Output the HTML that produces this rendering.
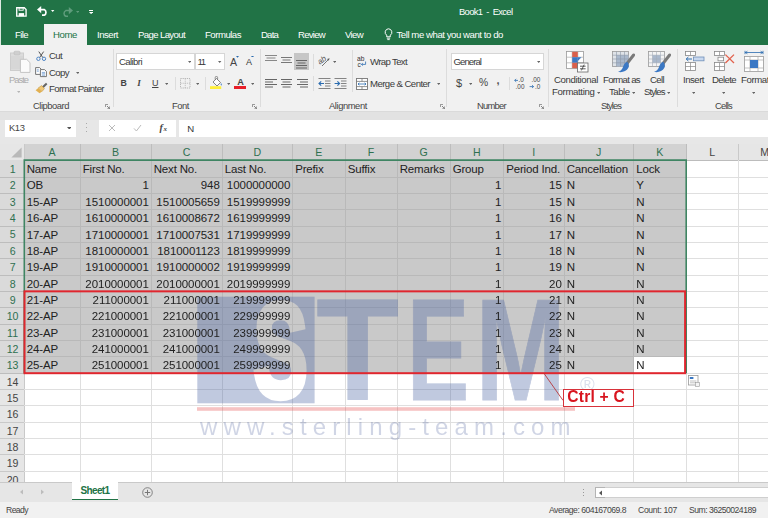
<!DOCTYPE html>
<html><head><meta charset="utf-8"><title>Book1 - Excel</title>
<style>
html,body{margin:0;padding:0;background:#fff;}
body{width:768px;height:518px;overflow:hidden;position:relative;font-family:"Liberation Sans",sans-serif;}
#app{position:absolute;left:0;top:0;width:768px;height:518px;overflow:hidden;}
.r{position:absolute;display:block;}
.t{position:absolute;white-space:pre;}
</style></head><body><div id="app">
<div class="r" style="left:0.00px;top:0.00px;width:768.00px;height:45.20px;background:#217346;"></div>
<div class="r" style="left:0.00px;top:0.00px;width:1.20px;height:45.20px;background:#dfe9e2;"></div>
<div class="r" style="left:43.80px;top:24.00px;width:43.20px;height:22.00px;background:#f1f1f1;"></div>
<svg class="r" style="left:15.9px;top:7.2px" width="10.8" height="9.9" viewBox="0 0 12 11"><path d="M0.8 0.8H9.2L11.2 2.8V10.2H0.8Z" fill="none" stroke="#fff" stroke-width="1.5"/><rect x="3.4" y="1" width="4.6" height="2.6" fill="none" stroke="#fff" stroke-width="1"/><rect x="3" y="6.8" width="6" height="3.4" fill="#fff"/></svg>
<svg class="r" style="left:36.70px;top:5.30px" width="12" height="11" viewBox="0 0 12 11"><path d="M2 4.6H7.2A3.1 3.1 0 0 1 7.2 10.2H5" fill="none" stroke="#fff" stroke-width="1.7"/><path d="M0 4.6L4.2 1V8.2Z" fill="#fff"/></svg>
<svg class="r" style="left:51.40px;top:10.40px" width="3.4" height="2" viewBox="0 0 3.4 2"><path d="M0 0H3.4L1.7 2Z" fill="#fff"/></svg>
<svg class="r" style="left:60.60px;top:5.50px" width="12" height="11" viewBox="0 0 12 11"><path d="M10 4.6H4.8A3.1 3.1 0 0 0 4.8 10.2H7" fill="none" stroke="#5f9c7c" stroke-width="1.5"/><path d="M12 4.6L7.8 1V8.2Z" fill="#5f9c7c"/></svg>
<svg class="r" style="left:75.80px;top:10.50px" width="3.4" height="2" viewBox="0 0 3.4 2"><path d="M0 0H3.4L1.7 2Z" fill="#5f9c7c"/></svg>
<div class="r" style="left:88.50px;top:9.50px;width:4.50px;height:1.20px;background:#fff;"></div>
<svg class="r" style="left:88.65px;top:11.90px" width="4.2" height="2.2" viewBox="0 0 4.2 2.2"><path d="M0 0H4.2L2.1 2.2Z" fill="#fff"/></svg>
<div class="t " style="left:459.00px;top:5.96px;font-size:9.4px;line-height:11.28px;color:#fff;letter-spacing:-0.648px;">Book1  -  Excel</div>
<div class="t " style="left:15.00px;top:29.24px;font-size:9.6px;line-height:11.52px;color:#fff;letter-spacing:-0.617px;">File</div>
<div class="t " style="left:53.00px;top:29.24px;font-size:9.6px;line-height:11.52px;color:#217346;letter-spacing:-0.402px;">Home</div>
<div class="t " style="left:97.00px;top:29.24px;font-size:9.6px;line-height:11.52px;color:#fff;letter-spacing:-0.501px;">Insert</div>
<div class="t " style="left:138.00px;top:29.24px;font-size:9.6px;line-height:11.52px;color:#fff;letter-spacing:-0.628px;">Page Layout</div>
<div class="t " style="left:205.00px;top:29.24px;font-size:9.6px;line-height:11.52px;color:#fff;letter-spacing:-0.501px;">Formulas</div>
<div class="t " style="left:261.00px;top:29.24px;font-size:9.6px;line-height:11.52px;color:#fff;letter-spacing:-0.819px;">Data</div>
<div class="t " style="left:298.00px;top:29.24px;font-size:9.6px;line-height:11.52px;color:#fff;letter-spacing:-0.746px;">Review</div>
<div class="t " style="left:345.00px;top:29.24px;font-size:9.6px;line-height:11.52px;color:#fff;letter-spacing:-0.659px;">View</div>
<svg class="r" style="left:383.50px;top:28.00px" width="9" height="13" viewBox="0 0 9 13"><path d="M4.5 0.8A3.5 3.5 0 0 1 6.3 7.2V8.8H2.7V7.2A3.5 3.5 0 0 1 4.5 0.8Z" fill="none" stroke="#fff" stroke-width="1"/><path d="M2.8 10.2H6.2M3.3 11.6H5.7" stroke="#fff" stroke-width="0.9"/></svg>
<div class="t " style="left:396.50px;top:29.24px;font-size:9.6px;line-height:11.52px;color:#fff;letter-spacing:-0.443px;">Tell me what you want to do</div>
<div class="r" style="left:0.00px;top:45.00px;width:768.00px;height:67.00px;background:#f1f1f1;"></div>
<div class="r" style="left:0.00px;top:111.00px;width:768.00px;height:1.00px;background:#dadada;"></div>
<div class="r" style="left:112.50px;top:49.00px;width:1.00px;height:58.00px;background:#dcdcdc;"></div>
<div class="r" style="left:259.50px;top:49.00px;width:1.00px;height:58.00px;background:#dcdcdc;"></div>
<div class="r" style="left:446.00px;top:49.00px;width:1.00px;height:58.00px;background:#dcdcdc;"></div>
<div class="r" style="left:547.50px;top:49.00px;width:1.00px;height:58.00px;background:#dcdcdc;"></div>
<div class="r" style="left:676.50px;top:49.00px;width:1.00px;height:58.00px;background:#dcdcdc;"></div>
<div class="r" style="left:174.50px;top:77.00px;width:1.00px;height:13.00px;background:#dcdcdc;"></div>
<div class="r" style="left:204.50px;top:77.00px;width:1.00px;height:13.00px;background:#dcdcdc;"></div>
<div class="r" style="left:313.00px;top:54.00px;width:1.00px;height:15.00px;background:#dcdcdc;"></div>
<div class="r" style="left:313.00px;top:76.00px;width:1.00px;height:15.00px;background:#dcdcdc;"></div>
<div class="r" style="left:351.50px;top:50.00px;width:1.00px;height:42.00px;background:#dcdcdc;"></div>
<div class="r" style="left:508.50px;top:77.00px;width:1.00px;height:13.00px;background:#dcdcdc;"></div>
<svg class="r" style="left:9.00px;top:50.00px" width="22" height="25" viewBox="0 0 22 25"><rect x="1.5" y="3" width="13" height="17.5" fill="#dcdcdc" stroke="#cdcdcd"/><path d="M3 6V19M5 6V19M7 6V19M9 6V19M11 6V19M13 6V19" stroke="#cfcfcf" stroke-width="0.7"/><rect x="5" y="1.2" width="6" height="3.6" rx="1" fill="#cfcfcf" stroke="#bdbdbd" stroke-width="0.6"/><path d="M11.4 9.3H17.6L21 12.6V22.4H11.4Z" fill="#fbfbfb" stroke="#c4c4c4"/></svg>
<div class="t " style="left:9.00px;top:74.36px;font-size:9.4px;line-height:11.28px;color:#aaa;letter-spacing:-1.007px;">Paste</div>
<svg class="r" style="left:16.70px;top:90.50px" width="3.6" height="2" viewBox="0 0 3.6 2"><path d="M0 0H3.6L1.8 2Z" fill="#b5b5b5"/></svg>
<svg class="r" style="left:36.00px;top:50.50px" width="11" height="11" viewBox="0 0 11 11"><path d="M2.8 0.6L6.8 6.6M7.6 0.6L3.6 6.6" stroke="#555" stroke-width="1" fill="none"/><circle cx="2.4" cy="7.8" r="1.7" fill="none" stroke="#4f86c6" stroke-width="1"/><circle cx="8" cy="7.8" r="1.7" fill="none" stroke="#4f86c6" stroke-width="1"/></svg>
<div class="t " style="left:49.00px;top:50.24px;font-size:9.6px;line-height:11.52px;color:#3a3a3a;letter-spacing:-0.646px;">Cut</div>
<svg class="r" style="left:35.00px;top:67.30px" width="13" height="11" viewBox="0 0 13 11"><path d="M0.6 0.6H4.6L6.2 2.2V7.4H0.6Z" fill="#fff" stroke="#666" stroke-width="0.9"/><path d="M5.4 2.6H9.6L11.4 4.4V9.6H5.4Z" fill="#fff" stroke="#666" stroke-width="0.9"/><path d="M6.8 5.4H10M6.8 6.8H10M6.8 8.2H10M1.8 2.8H3.8M1.8 4.2H3.8" stroke="#5a8cc8" stroke-width="0.7"/></svg>
<div class="t " style="left:49.00px;top:66.74px;font-size:9.6px;line-height:11.52px;color:#3a3a3a;letter-spacing:-0.603px;">Copy</div>
<svg class="r" style="left:75.70px;top:71.50px" width="3.6" height="2" viewBox="0 0 3.6 2"><path d="M0 0H3.6L1.8 2Z" fill="#666"/></svg>
<svg class="r" style="left:34.80px;top:81.80px" width="13" height="12" viewBox="0 0 13 12"><path d="M7 4.5L11 0.8L12.4 2.2L8.6 6Z" fill="#666"/><path d="M3.2 6L6.6 3.6L9.4 6.6L7 9.6Z" fill="#f0c878" stroke="#b98a2e" stroke-width="0.5"/><path d="M0.6 8.2L3.2 6L7 9.6L4.6 11.2Z" fill="#e2b050"/></svg>
<div class="t " style="left:49.00px;top:82.74px;font-size:9.6px;line-height:11.52px;color:#3a3a3a;letter-spacing:-0.606px;">Format Painter</div>
<div class="t " style="left:33.00px;top:99.86px;font-size:9.4px;line-height:11.28px;color:#444;letter-spacing:-0.470px;">Clipboard</div>
<svg class="r" style="left:105.00px;top:103.50px" width="5" height="5" viewBox="0 0 5 5"><path d="M0.4 3V0.4H3" fill="none" stroke="#777" stroke-width="0.8"/><path d="M2 2L4.6 4.6M4.8 2.4V4.8H2.4" fill="none" stroke="#777" stroke-width="0.9"/></svg>
<div class="r" style="left:116.00px;top:53.00px;width:78.60px;height:16.60px;background:#fff;border:1px solid #d6d6d6;box-sizing:border-box;"></div>
<div class="t " style="left:119.00px;top:55.74px;font-size:9.6px;line-height:11.52px;color:#3a3a3a;letter-spacing:-0.601px;">Calibri</div>
<svg class="r" style="left:187.80px;top:61.00px" width="3.4" height="2" viewBox="0 0 3.4 2"><path d="M0 0H3.4L1.7 2Z" fill="#666"/></svg>
<div class="r" style="left:195.00px;top:53.00px;width:30.00px;height:16.60px;background:#fff;border:1px solid #d6d6d6;box-sizing:border-box;"></div>
<div class="t " style="left:197.50px;top:55.74px;font-size:9.6px;line-height:11.52px;color:#3a3a3a;letter-spacing:-1.482px;">11</div>
<svg class="r" style="left:218.30px;top:61.00px" width="3.4" height="2" viewBox="0 0 3.4 2"><path d="M0 0H3.4L1.7 2Z" fill="#666"/></svg>
<div class="t " style="left:230.00px;top:55.64px;font-size:10.6px;line-height:12.72px;color:#444;">A</div>
<svg class="r" style="left:236.00px;top:56.10px" width="3" height="1.8" viewBox="0 0 3 1.8"><path d="M0 0H3L1.5 1.8Z" fill="#2b6cb0"/></svg>
<div class="t " style="left:246.00px;top:57.40px;font-size:9px;line-height:10.80px;color:#333;">A</div>
<svg class="r" style="left:250.50px;top:55.60px" width="3" height="1.8" viewBox="0 0 3 1.8"><path d="M0 0H3L1.5 1.8Z" fill="#2b6cb0"/></svg>
<div class="t " style="left:120.60px;top:77.92px;font-size:8.8px;line-height:10.56px;color:#444;font-weight:bold;">B</div>
<div class="t " style="left:137.30px;top:77.80px;font-size:9px;line-height:10.80px;color:#444;font-weight:bold;font-style:italic;font-family:'Liberation Serif',serif;">I</div>
<div class="t " style="left:152.00px;top:77.80px;font-size:9px;line-height:10.80px;color:#444;text-decoration:underline;">U</div>
<svg class="r" style="left:164.80px;top:82.50px" width="3.4" height="2" viewBox="0 0 3.4 2"><path d="M0 0H3.4L1.7 2Z" fill="#666"/></svg>
<svg class="r" style="left:180.00px;top:78.00px" width="11" height="11" viewBox="0 0 11 11"><rect x="0.5" y="0.5" width="9.5" height="9.5" fill="none" stroke="#b0b0b0" stroke-width="0.9" stroke-dasharray="1.2 0.9"/><path d="M5.25 0.5V10M0.5 5.25H10" stroke="#b8b8b8" stroke-width="0.8" stroke-dasharray="1.2 0.9"/></svg>
<svg class="r" style="left:195.80px;top:82.50px" width="3.4" height="2" viewBox="0 0 3.4 2"><path d="M0 0H3.4L1.7 2Z" fill="#666"/></svg>
<svg class="r" style="left:210.00px;top:75.90px" width="13" height="14" viewBox="0 0 13 14"><path d="M3 6L6.5 2.5L10.5 6.5L7 10L3 6Z" fill="#fdfdfd" stroke="#666" stroke-width="0.8"/><path d="M5.2 3.6V1.6A1.2 1.2 0 0 1 7.6 1.6V3.4" fill="none" stroke="#666" stroke-width="0.7"/><path d="M11 7C11.8 8.3 12.2 8.9 11.4 9.5C10.5 9.2 10.6 8.3 11 7Z" fill="#3b78c4"/><rect x="0" y="10.2" width="11.2" height="2.8" fill="#ffef3a"/></svg>
<svg class="r" style="left:226.80px;top:82.50px" width="3.4" height="2" viewBox="0 0 3.4 2"><path d="M0 0H3.4L1.7 2Z" fill="#666"/></svg>
<div class="t " style="left:237.30px;top:76.88px;font-size:9.2px;line-height:11.04px;color:#444;font-weight:bold;">A</div>
<div class="r" style="left:234.40px;top:85.90px;width:11.60px;height:2.90px;background:#e8202a;"></div>
<svg class="r" style="left:250.80px;top:82.50px" width="3.4" height="2" viewBox="0 0 3.4 2"><path d="M0 0H3.4L1.7 2Z" fill="#666"/></svg>
<div class="t " style="left:172.00px;top:99.86px;font-size:9.4px;line-height:11.28px;color:#444;letter-spacing:-0.452px;">Font</div>
<svg class="r" style="left:251.60px;top:103.50px" width="5" height="5" viewBox="0 0 5 5"><path d="M0.4 3V0.4H3" fill="none" stroke="#777" stroke-width="0.8"/><path d="M2 2L4.6 4.6M4.8 2.4V4.8H2.4" fill="none" stroke="#777" stroke-width="0.9"/></svg>
<svg class="r" style="left:265.00px;top:54.50px" width="14" height="14" viewBox="0 0 14 14"><rect x="0" y="0" width="12" height="1" fill="#888"/><rect x="1.5" y="2.5" width="9" height="1" fill="#888"/><rect x="0" y="5" width="12" height="1" fill="#888"/></svg>
<svg class="r" style="left:281.00px;top:57.00px" width="14" height="14" viewBox="0 0 14 14"><rect x="0" y="0" width="11" height="1" fill="#777"/><rect x="1.5" y="2.5" width="8" height="1" fill="#777"/><rect x="0" y="5" width="11" height="1" fill="#777"/></svg>
<div class="r" style="left:293.80px;top:53.00px;width:15.60px;height:17.00px;background:#c6c6c6;"></div>
<svg class="r" style="left:296.20px;top:59.50px" width="14" height="14" viewBox="0 0 14 14"><rect x="0" y="0" width="11" height="1" fill="#666"/><rect x="1.5" y="2.5" width="8" height="1" fill="#666"/><rect x="0" y="5" width="11" height="1" fill="#666"/><rect x="0" y="7.5" width="11" height="1" fill="#666"/></svg>
<svg class="r" style="left:318.00px;top:55.00px" width="13" height="12" viewBox="0 0 13 12"><text x="0.5" y="8" font-size="8" font-style="italic" fill="#555" transform="rotate(-35 4 7)" font-family="Liberation Sans,sans-serif">ab</text><path d="M4 11L11 4" stroke="#555" stroke-width="0.8"/><path d="M11.6 3.2L9 4L10.8 5.8Z" fill="#555"/></svg>
<svg class="r" style="left:332.80px;top:61.00px" width="3.4" height="2" viewBox="0 0 3.4 2"><path d="M0 0H3.4L1.7 2Z" fill="#666"/></svg>
<svg class="r" style="left:265.00px;top:78.50px" width="14" height="14" viewBox="0 0 14 14"><rect x="0" y="0" width="12" height="1" fill="#666"/><rect x="0" y="2.5" width="8" height="1" fill="#666"/><rect x="0" y="5" width="12" height="1" fill="#666"/><rect x="0" y="7.5" width="8" height="1" fill="#666"/></svg>
<svg class="r" style="left:281.00px;top:78.50px" width="14" height="14" viewBox="0 0 14 14"><rect x="0" y="0" width="11" height="1" fill="#666"/><rect x="1.5" y="2.5" width="8" height="1" fill="#666"/><rect x="0" y="5" width="11" height="1" fill="#666"/><rect x="1.5" y="7.5" width="8" height="1" fill="#666"/></svg>
<svg class="r" style="left:297.00px;top:78.50px" width="14" height="14" viewBox="0 0 14 14"><rect x="0" y="0" width="11" height="1" fill="#666"/><rect x="3" y="2.5" width="8" height="1" fill="#666"/><rect x="0" y="5" width="11" height="1" fill="#666"/><rect x="3" y="7.5" width="8" height="1" fill="#666"/></svg>
<svg class="r" style="left:318.00px;top:77.50px" width="13" height="12" viewBox="0 0 13 12"><path d="M0.5 0.5H12.5M0.5 10.5H12.5M7 3H12.5M7 5.5H12.5M7 8H12.5" stroke="#777" stroke-width="0.9"/><path d="M6 5.5H1.2M3.2 3.4L1 5.5L3.2 7.6" stroke="#2b6cb0" stroke-width="1.1" fill="none"/></svg>
<svg class="r" style="left:334.00px;top:77.50px" width="13" height="12" viewBox="0 0 13 12"><path d="M0.5 0.5H12.5M0.5 10.5H12.5M7 3H12.5M7 5.5H12.5M7 8H12.5" stroke="#777" stroke-width="0.9"/><path d="M0.6 5.5H5.4M3.4 3.4L5.6 5.5L3.4 7.6" stroke="#2b6cb0" stroke-width="1.1" fill="none"/></svg>
<svg class="r" style="left:357.00px;top:56.00px" width="11" height="11" viewBox="0 0 11 11"><text x="0" y="4.8" font-size="6.6" fill="#333" font-family="Liberation Sans,sans-serif">ab</text><text x="0.4" y="10.6" font-size="6.6" fill="#333" font-family="Liberation Sans,sans-serif">c</text><path d="M8.6 5.5V8.4H4.6M5.8 7.2L4.4 8.4L5.8 9.6" fill="none" stroke="#2b6cb0" stroke-width="0.8"/></svg>
<div class="t " style="left:370.00px;top:56.24px;font-size:9.6px;line-height:11.52px;color:#3a3a3a;letter-spacing:-0.651px;">Wrap Text</div>
<svg class="r" style="left:356.00px;top:77.50px" width="12" height="12" viewBox="0 0 12 12"><rect x="0.5" y="0.5" width="11" height="11" fill="#fff" stroke="#777" stroke-width="0.9"/><path d="M0.5 3.4H11.5M0.5 8.6H11.5M6 0.5V3.4M6 8.6V11.5" stroke="#777" stroke-width="0.8"/><path d="M2 6H10M3.4 4.8L2 6L3.4 7.2M8.6 4.8L10 6L8.6 7.2" fill="none" stroke="#2b6cb0" stroke-width="0.8"/></svg>
<div class="t " style="left:370.00px;top:78.24px;font-size:9.6px;line-height:11.52px;color:#3a3a3a;letter-spacing:-0.554px;">Merge &amp; Center</div>
<svg class="r" style="left:436.80px;top:83.00px" width="3.4" height="2" viewBox="0 0 3.4 2"><path d="M0 0H3.4L1.7 2Z" fill="#666"/></svg>
<div class="t " style="left:329.00px;top:99.86px;font-size:9.4px;line-height:11.28px;color:#444;letter-spacing:-0.422px;">Alignment</div>
<svg class="r" style="left:439.50px;top:103.50px" width="5" height="5" viewBox="0 0 5 5"><path d="M0.4 3V0.4H3" fill="none" stroke="#777" stroke-width="0.8"/><path d="M2 2L4.6 4.6M4.8 2.4V4.8H2.4" fill="none" stroke="#777" stroke-width="0.9"/></svg>
<div class="r" style="left:451.00px;top:53.00px;width:93.00px;height:16.60px;background:#fff;border:1px solid #d6d6d6;box-sizing:border-box;"></div>
<div class="t " style="left:453.50px;top:55.74px;font-size:9.6px;line-height:11.52px;color:#3a3a3a;letter-spacing:-0.950px;">General</div>
<svg class="r" style="left:536.80px;top:61.00px" width="3.4" height="2" viewBox="0 0 3.4 2"><path d="M0 0H3.4L1.7 2Z" fill="#666"/></svg>
<div class="t " style="left:456.00px;top:76.90px;font-size:11px;line-height:13.20px;color:#444;">$</div>
<svg class="r" style="left:468.80px;top:82.50px" width="3.4" height="2" viewBox="0 0 3.4 2"><path d="M0 0H3.4L1.7 2Z" fill="#666"/></svg>
<div class="t " style="left:479.00px;top:77.32px;font-size:10.3px;line-height:12.36px;color:#444;">%</div>
<div class="t " style="left:496.50px;top:73.60px;font-size:11px;line-height:13.20px;color:#555;font-weight:bold;">,</div>
<svg class="r" style="left:514.00px;top:77.00px" width="13" height="13" viewBox="0 0 13 13"><text x="4.4" y="5.4" font-size="6.4" fill="#444" font-family="Liberation Sans,sans-serif">.0</text><text x="1.6" y="12" font-size="6.4" fill="#444" font-family="Liberation Sans,sans-serif">.00</text><path d="M4 3.4H0.8M2.2 2L0.6 3.4L2.2 4.8" stroke="#2b6cb0" stroke-width="0.8" fill="none"/></svg>
<svg class="r" style="left:529.00px;top:77.00px" width="13" height="13" viewBox="0 0 13 13"><text x="2.4" y="5.4" font-size="6.4" fill="#444" font-family="Liberation Sans,sans-serif">.00</text><text x="6" y="12" font-size="6.4" fill="#444" font-family="Liberation Sans,sans-serif">.0</text><path d="M0.6 9.6H4.4M3 8.2L4.6 9.6L3 11" stroke="#2b6cb0" stroke-width="0.8" fill="none"/></svg>
<div class="t " style="left:477.00px;top:99.86px;font-size:9.4px;line-height:11.28px;color:#444;letter-spacing:-0.738px;">Number</div>
<svg class="r" style="left:538.80px;top:103.50px" width="5" height="5" viewBox="0 0 5 5"><path d="M0.4 3V0.4H3" fill="none" stroke="#777" stroke-width="0.8"/><path d="M2 2L4.6 4.6M4.8 2.4V4.8H2.4" fill="none" stroke="#777" stroke-width="0.9"/></svg>
<svg class="r" style="left:565.50px;top:50.50px" width="23" height="23" viewBox="0 0 23 23"><rect x="0.5" y="0.5" width="17" height="17" fill="#fff" stroke="#999" stroke-width="0.8"/><path d="M0.5 6.2H17.5M0.5 11.8H17.5M6.2 0.5V17.5M11.8 0.5V17.5" stroke="#aaa" stroke-width="0.7"/><rect x="6.2" y="0.8" width="5.6" height="5.4" fill="#d9604c"/><rect x="6.2" y="6.2" width="5.6" height="5.6" fill="#3b78c4"/><rect x="6.2" y="11.8" width="5.6" height="5.4" fill="#d9604c"/><path d="M11.8 6.2H15.5L11.8 10Z" fill="#3b78c4"/><rect x="11.5" y="12" width="10.5" height="9" fill="#fff" stroke="#666" stroke-width="0.8"/><path d="M14 15.2H19.6M14 17.8H19.6M18.2 13.6L15.4 19.4" stroke="#333" stroke-width="0.8"/></svg>
<div class="t " style="left:554.00px;top:74.24px;font-size:9.6px;line-height:11.52px;color:#3a3a3a;letter-spacing:-0.366px;">Conditional</div>
<div class="t " style="left:552.00px;top:86.24px;font-size:9.6px;line-height:11.52px;color:#3a3a3a;letter-spacing:-0.338px;">Formatting</div>
<svg class="r" style="left:596.80px;top:91.50px" width="3.4" height="2" viewBox="0 0 3.4 2"><path d="M0 0H3.4L1.7 2Z" fill="#666"/></svg>
<svg class="r" style="left:611.50px;top:51.00px" width="23" height="23" viewBox="0 0 23 23"><rect x="0.5" y="0.5" width="16" height="15" fill="#dfe3e8" stroke="#999" stroke-width="0.8"/><rect x="4.5" y="4.2" width="12" height="11.3" fill="#a9b8cc"/><path d="M0.5 4.2H16.5M0.5 8H16.5M0.5 11.8H16.5M4.5 0.5V15.5M8.5 0.5V15.5M12.5 0.5V15.5" stroke="#8d98a8" stroke-width="0.6"/><path d="M21.6 4L15.4 12" stroke="#7a7a7a" stroke-width="3" stroke-linecap="round"/><path d="M15.2 10.8C12.4 11.8 11.6 14.4 10.6 17C9.8 19 8 20.2 6 20.8C9.6 21.8 14.4 20.6 16.4 16.8C17.2 15.2 17 12.8 15.2 10.8Z" fill="#3b78c4"/></svg>
<div class="t " style="left:603.00px;top:74.24px;font-size:9.6px;line-height:11.52px;color:#3a3a3a;letter-spacing:-0.690px;">Format as</div>
<div class="t " style="left:609.00px;top:86.24px;font-size:9.6px;line-height:11.52px;color:#3a3a3a;letter-spacing:-0.490px;">Table</div>
<svg class="r" style="left:631.80px;top:91.50px" width="3.4" height="2" viewBox="0 0 3.4 2"><path d="M0 0H3.4L1.7 2Z" fill="#666"/></svg>
<svg class="r" style="left:647.50px;top:51.00px" width="23" height="23" viewBox="0 0 23 23"><rect x="0.5" y="0.5" width="16" height="15" fill="#f4f4f4" stroke="#999" stroke-width="0.8"/><rect x="4.5" y="4.2" width="8" height="7.6" fill="#a9b8cc"/><path d="M0.5 4.2H16.5M0.5 8H16.5M0.5 11.8H16.5M4.5 0.5V15.5M8.5 0.5V15.5M12.5 0.5V15.5" stroke="#a4acb8" stroke-width="0.6"/><path d="M21.6 4L15.4 12" stroke="#7a7a7a" stroke-width="3" stroke-linecap="round"/><path d="M15.2 10.8C12.4 11.8 11.6 14.4 10.6 17C9.8 19 8 20.2 6 20.8C9.6 21.8 14.4 20.6 16.4 16.8C17.2 15.2 17 12.8 15.2 10.8Z" fill="#3b78c4"/></svg>
<div class="t " style="left:650.00px;top:74.24px;font-size:9.6px;line-height:11.52px;color:#3a3a3a;letter-spacing:-0.634px;">Cell</div>
<div class="t " style="left:644.00px;top:86.24px;font-size:9.6px;line-height:11.52px;color:#3a3a3a;letter-spacing:-0.940px;">Styles</div>
<svg class="r" style="left:666.80px;top:91.50px" width="3.4" height="2" viewBox="0 0 3.4 2"><path d="M0 0H3.4L1.7 2Z" fill="#666"/></svg>
<div class="t " style="left:601.00px;top:99.86px;font-size:9.4px;line-height:11.28px;color:#444;letter-spacing:-0.933px;">Styles</div>
<svg class="r" style="left:684.50px;top:50.50px" width="22" height="22" viewBox="0 0 22 22"><rect x="0.5" y="0.5" width="10" height="4" fill="#fff" stroke="#888" stroke-width="0.8"/><path d="M5.5 0.5V4.5" stroke="#888" stroke-width="0.7"/><rect x="0.5" y="11.5" width="10" height="8" fill="#fff" stroke="#888" stroke-width="0.8"/><path d="M5.5 11.5V19.5M0.5 15.5H10.5" stroke="#888" stroke-width="0.7"/><rect x="8.5" y="6" width="10.5" height="3.8" fill="#c8d8ee" stroke="#6f8fb8" stroke-width="0.8"/><path d="M7 8H1.4M3.4 6L1.2 8L3.4 10" stroke="#2b6cb0" stroke-width="1" fill="none"/></svg>
<div class="t " style="left:683.00px;top:74.24px;font-size:9.6px;line-height:11.52px;color:#3a3a3a;letter-spacing:-0.501px;">Insert</div>
<svg class="r" style="left:691.80px;top:91.50px" width="3.4" height="2" viewBox="0 0 3.4 2"><path d="M0 0H3.4L1.7 2Z" fill="#666"/></svg>
<svg class="r" style="left:714.00px;top:50.50px" width="23" height="22" viewBox="0 0 23 22"><rect x="0.5" y="0.5" width="10" height="4" fill="#fff" stroke="#888" stroke-width="0.8"/><path d="M5.5 0.5V4.5" stroke="#888" stroke-width="0.7"/><rect x="0.5" y="11.5" width="10" height="8" fill="#fff" stroke="#888" stroke-width="0.8"/><path d="M5.5 11.5V19.5M0.5 15.5H10.5" stroke="#888" stroke-width="0.7"/><rect x="4" y="6.2" width="5.6" height="3.6" fill="#fff" stroke="#888" stroke-width="0.8"/><path d="M11.4 3.6L20 12M20 3.6L11.4 12" stroke="#e2614c" stroke-width="1.3"/></svg>
<div class="t " style="left:712.00px;top:74.24px;font-size:9.6px;line-height:11.52px;color:#3a3a3a;letter-spacing:-0.625px;">Delete</div>
<svg class="r" style="left:721.80px;top:91.50px" width="3.4" height="2" viewBox="0 0 3.4 2"><path d="M0 0H3.4L1.7 2Z" fill="#666"/></svg>
<svg class="r" style="left:743.00px;top:49.50px" width="23" height="24" viewBox="0 0 23 24"><path d="M2 2.5H20M2 0.8V4.2M20 0.8V4.2M4.4 1.2L2.4 2.5L4.4 3.8M17.6 1.2L19.6 2.5L17.6 3.8" stroke="#2b6cb0" stroke-width="0.8" fill="none"/><rect x="1.5" y="6.5" width="19" height="15" fill="#fff" stroke="#999" stroke-width="0.8"/><path d="M1.5 10H20.5M1.5 18H20.5M7 6.5V21.5M15 6.5V21.5" stroke="#aaa" stroke-width="0.7"/><rect x="7" y="10" width="8" height="8" fill="#3b78c4"/></svg>
<div class="t " style="left:741.00px;top:74.24px;font-size:9.6px;line-height:11.52px;color:#3a3a3a;letter-spacing:-0.400px;">Format</div>
<svg class="r" style="left:751.80px;top:91.50px" width="3.4" height="2" viewBox="0 0 3.4 2"><path d="M0 0H3.4L1.7 2Z" fill="#666"/></svg>
<div class="t " style="left:715.00px;top:99.86px;font-size:9.4px;line-height:11.28px;color:#444;letter-spacing:-0.779px;">Cells</div>
<div class="r" style="left:0.00px;top:112.00px;width:768.00px;height:32.00px;background:#e7e7e7;"></div>
<div class="r" style="left:0.00px;top:112.00px;width:768.00px;height:7.80px;background:#e2e2e2;"></div>
<div class="r" style="left:5.00px;top:119.50px;width:71.00px;height:17.00px;background:#fff;"></div>
<div class="t " style="left:9.00px;top:122.36px;font-size:9.4px;line-height:11.28px;color:#444;letter-spacing:-0.408px;">K13</div>
<svg class="r" style="left:66.70px;top:126.90px" width="4.6" height="2.6" viewBox="0 0 4.6 2.6"><path d="M0 0H4.6L2.3 2.6Z" fill="#555"/></svg>
<div class="r" style="left:86.00px;top:123.00px;width:1.20px;height:1.20px;background:#aaa;"></div>
<div class="r" style="left:86.00px;top:127.00px;width:1.20px;height:1.20px;background:#aaa;"></div>
<div class="r" style="left:86.00px;top:131.00px;width:1.20px;height:1.20px;background:#aaa;"></div>
<div class="r" style="left:99.00px;top:119.50px;width:76.50px;height:17.00px;background:#fff;"></div>
<svg class="r" style="left:107.50px;top:124.00px" width="8" height="8" viewBox="0 0 8 8"><path d="M1 1L7 7M7 1L1 7" stroke="#bbb" stroke-width="1"/></svg>
<svg class="r" style="left:132.50px;top:124.00px" width="9" height="8" viewBox="0 0 9 8"><path d="M1 4.4L3.4 7L8 1" stroke="#bbb" stroke-width="1" fill="none"/></svg>
<div class="t " style="left:159.50px;top:122.00px;font-size:10px;line-height:12.00px;color:#444;font-weight:bold;font-style:italic;font-family:'Liberation Serif',serif;">f</div>
<div class="t " style="left:163.50px;top:125.30px;font-size:7px;line-height:8.40px;color:#444;font-weight:bold;font-style:italic;font-family:'Liberation Serif',serif;">x</div>
<div class="r" style="left:179.00px;top:119.50px;width:589.00px;height:17.00px;background:#fff;"></div>
<div class="t " style="left:187.30px;top:123.14px;font-size:9.6px;line-height:11.52px;color:#333;">N</div>
<div class="r" style="left:0.00px;top:144.00px;width:768.00px;height:337.50px;background:#fff;"></div>
<div class="r" style="left:0.00px;top:144.00px;width:768.00px;height:16.00px;background:#e6e6e6;"></div>
<div class="r" style="left:24.00px;top:144.00px;width:662.00px;height:16.00px;background:#d2d2d2;"></div>
<svg class="r" style="left:11.40px;top:147.40px" width="11" height="11" viewBox="0 0 11 11"><path d="M10.6 0.4V10.6H0.4Z" fill="#b9b9b9"/></svg>
<div class="t " style="left:48.46px;top:145.94px;font-size:10.6px;line-height:12.72px;color:#2f7050;">A</div>
<div class="r" style="left:79.50px;top:144.00px;width:1.00px;height:16.00px;background:#bdbdbd;"></div>
<div class="t " style="left:111.96px;top:145.94px;font-size:10.6px;line-height:12.72px;color:#2f7050;">B</div>
<div class="r" style="left:150.50px;top:144.00px;width:1.00px;height:16.00px;background:#bdbdbd;"></div>
<div class="t " style="left:182.67px;top:145.94px;font-size:10.6px;line-height:12.72px;color:#2f7050;">C</div>
<div class="r" style="left:221.50px;top:144.00px;width:1.00px;height:16.00px;background:#bdbdbd;"></div>
<div class="t " style="left:253.42px;top:145.94px;font-size:10.6px;line-height:12.72px;color:#2f7050;">D</div>
<div class="r" style="left:292.00px;top:144.00px;width:1.00px;height:16.00px;background:#bdbdbd;"></div>
<div class="t " style="left:315.21px;top:145.94px;font-size:10.6px;line-height:12.72px;color:#2f7050;">E</div>
<div class="r" style="left:344.50px;top:144.00px;width:1.00px;height:16.00px;background:#bdbdbd;"></div>
<div class="t " style="left:367.76px;top:145.94px;font-size:10.6px;line-height:12.72px;color:#2f7050;">F</div>
<div class="r" style="left:396.50px;top:144.00px;width:1.00px;height:16.00px;background:#bdbdbd;"></div>
<div class="t " style="left:419.38px;top:145.94px;font-size:10.6px;line-height:12.72px;color:#2f7050;">G</div>
<div class="r" style="left:449.50px;top:144.00px;width:1.00px;height:16.00px;background:#bdbdbd;"></div>
<div class="t " style="left:472.92px;top:145.94px;font-size:10.6px;line-height:12.72px;color:#2f7050;">H</div>
<div class="r" style="left:503.00px;top:144.00px;width:1.00px;height:16.00px;background:#bdbdbd;"></div>
<div class="t " style="left:532.28px;top:145.94px;font-size:10.6px;line-height:12.72px;color:#2f7050;">I</div>
<div class="r" style="left:563.50px;top:144.00px;width:1.00px;height:16.00px;background:#bdbdbd;"></div>
<div class="t " style="left:596.10px;top:145.94px;font-size:10.6px;line-height:12.72px;color:#2f7050;">J</div>
<div class="r" style="left:633.00px;top:144.00px;width:1.00px;height:16.00px;background:#bdbdbd;"></div>
<div class="t " style="left:656.21px;top:145.94px;font-size:10.6px;line-height:12.72px;color:#2f7050;">K</div>
<div class="r" style="left:685.50px;top:144.00px;width:1.00px;height:16.00px;background:#bdbdbd;"></div>
<div class="t " style="left:709.30px;top:145.94px;font-size:10.6px;line-height:12.72px;color:#444;">L</div>
<div class="r" style="left:738.00px;top:144.00px;width:1.00px;height:16.00px;background:#c9c9c9;"></div>
<div class="t " style="left:760.34px;top:145.94px;font-size:10.6px;line-height:12.72px;color:#444;">M</div>
<div class="r" style="left:790.50px;top:144.00px;width:1.00px;height:16.00px;background:#c9c9c9;"></div>
<div class="r" style="left:23.50px;top:144.00px;width:1.00px;height:16.00px;background:#c9c9c9;"></div>
<div class="r" style="left:686.00px;top:159.50px;width:82.00px;height:1.00px;background:#bcbcbc;"></div>
<div class="r" style="left:0.00px;top:160.00px;width:24.00px;height:321.50px;background:#e6e6e6;"></div>
<div class="r" style="left:0.00px;top:160.00px;width:24.00px;height:213.20px;background:#dadada;"></div>
<div class="t " style="left:9.65px;top:163.06px;font-size:10.6px;line-height:12.72px;color:#2f7050;">1</div>
<div class="r" style="left:0.00px;top:176.50px;width:24.00px;height:1.00px;background:#bdbdbd;"></div>
<div class="t " style="left:9.65px;top:179.42px;font-size:10.6px;line-height:12.72px;color:#2f7050;">2</div>
<div class="r" style="left:0.00px;top:192.85px;width:24.00px;height:1.00px;background:#bdbdbd;"></div>
<div class="t " style="left:9.65px;top:195.77px;font-size:10.6px;line-height:12.72px;color:#2f7050;">3</div>
<div class="r" style="left:0.00px;top:209.20px;width:24.00px;height:1.00px;background:#bdbdbd;"></div>
<div class="t " style="left:9.65px;top:212.12px;font-size:10.6px;line-height:12.72px;color:#2f7050;">4</div>
<div class="r" style="left:0.00px;top:225.55px;width:24.00px;height:1.00px;background:#bdbdbd;"></div>
<div class="t " style="left:9.65px;top:228.47px;font-size:10.6px;line-height:12.72px;color:#2f7050;">5</div>
<div class="r" style="left:0.00px;top:241.90px;width:24.00px;height:1.00px;background:#bdbdbd;"></div>
<div class="t " style="left:9.65px;top:244.81px;font-size:10.6px;line-height:12.72px;color:#2f7050;">6</div>
<div class="r" style="left:0.00px;top:258.25px;width:24.00px;height:1.00px;background:#bdbdbd;"></div>
<div class="t " style="left:9.65px;top:261.17px;font-size:10.6px;line-height:12.72px;color:#2f7050;">7</div>
<div class="r" style="left:0.00px;top:274.60px;width:24.00px;height:1.00px;background:#bdbdbd;"></div>
<div class="t " style="left:9.65px;top:277.52px;font-size:10.6px;line-height:12.72px;color:#2f7050;">8</div>
<div class="r" style="left:0.00px;top:290.95px;width:24.00px;height:1.00px;background:#bdbdbd;"></div>
<div class="t " style="left:9.65px;top:293.87px;font-size:10.6px;line-height:12.72px;color:#2f7050;">9</div>
<div class="r" style="left:0.00px;top:307.30px;width:24.00px;height:1.00px;background:#bdbdbd;"></div>
<div class="t " style="left:6.71px;top:310.22px;font-size:10.6px;line-height:12.72px;color:#2f7050;">10</div>
<div class="r" style="left:0.00px;top:323.65px;width:24.00px;height:1.00px;background:#bdbdbd;"></div>
<div class="t " style="left:7.10px;top:326.56px;font-size:10.6px;line-height:12.72px;color:#2f7050;">11</div>
<div class="r" style="left:0.00px;top:340.00px;width:24.00px;height:1.00px;background:#bdbdbd;"></div>
<div class="t " style="left:6.71px;top:342.92px;font-size:10.6px;line-height:12.72px;color:#2f7050;">12</div>
<div class="r" style="left:0.00px;top:356.35px;width:24.00px;height:1.00px;background:#bdbdbd;"></div>
<div class="t " style="left:6.71px;top:359.27px;font-size:10.6px;line-height:12.72px;color:#2f7050;">13</div>
<div class="r" style="left:0.00px;top:372.70px;width:24.00px;height:1.00px;background:#bdbdbd;"></div>
<div class="t " style="left:6.71px;top:375.62px;font-size:10.6px;line-height:12.72px;color:#444;">14</div>
<div class="r" style="left:0.00px;top:389.05px;width:24.00px;height:1.00px;background:#c9c9c9;"></div>
<div class="t " style="left:6.71px;top:391.97px;font-size:10.6px;line-height:12.72px;color:#444;">15</div>
<div class="r" style="left:0.00px;top:405.40px;width:24.00px;height:1.00px;background:#c9c9c9;"></div>
<div class="t " style="left:6.71px;top:408.32px;font-size:10.6px;line-height:12.72px;color:#444;">16</div>
<div class="r" style="left:0.00px;top:421.75px;width:24.00px;height:1.00px;background:#c9c9c9;"></div>
<div class="t " style="left:6.71px;top:424.67px;font-size:10.6px;line-height:12.72px;color:#444;">17</div>
<div class="r" style="left:0.00px;top:438.10px;width:24.00px;height:1.00px;background:#c9c9c9;"></div>
<div class="t " style="left:6.71px;top:441.02px;font-size:10.6px;line-height:12.72px;color:#444;">18</div>
<div class="r" style="left:0.00px;top:454.45px;width:24.00px;height:1.00px;background:#c9c9c9;"></div>
<div class="t " style="left:6.71px;top:457.37px;font-size:10.6px;line-height:12.72px;color:#444;">19</div>
<div class="r" style="left:0.00px;top:470.80px;width:24.00px;height:1.00px;background:#c9c9c9;"></div>
<div class="t " style="left:6.71px;top:473.72px;font-size:10.6px;line-height:12.72px;color:#444;">20</div>
<div class="r" style="left:0.00px;top:487.15px;width:24.00px;height:1.00px;background:#c9c9c9;"></div>
<div class="r" style="left:23.50px;top:160.00px;width:1.00px;height:321.50px;background:#c9c9c9;"></div>
<div class="r" style="left:24.00px;top:160.00px;width:662.00px;height:212.55px;background:#c9c9c9;"></div>
<div class="r" style="left:633.50px;top:356.85px;width:52.50px;height:16.35px;background:#fff;"></div>
<div class="r" style="left:24.00px;top:176.50px;width:744.00px;height:1.00px;background:#dfdfdf;"></div>
<div class="r" style="left:24.00px;top:176.50px;width:662.00px;height:1.00px;background:#b9b9b9;"></div>
<div class="r" style="left:24.00px;top:192.85px;width:744.00px;height:1.00px;background:#dfdfdf;"></div>
<div class="r" style="left:24.00px;top:192.85px;width:662.00px;height:1.00px;background:#b9b9b9;"></div>
<div class="r" style="left:24.00px;top:209.20px;width:744.00px;height:1.00px;background:#dfdfdf;"></div>
<div class="r" style="left:24.00px;top:209.20px;width:662.00px;height:1.00px;background:#b9b9b9;"></div>
<div class="r" style="left:24.00px;top:225.55px;width:744.00px;height:1.00px;background:#dfdfdf;"></div>
<div class="r" style="left:24.00px;top:225.55px;width:662.00px;height:1.00px;background:#b9b9b9;"></div>
<div class="r" style="left:24.00px;top:241.90px;width:744.00px;height:1.00px;background:#dfdfdf;"></div>
<div class="r" style="left:24.00px;top:241.90px;width:662.00px;height:1.00px;background:#b9b9b9;"></div>
<div class="r" style="left:24.00px;top:258.25px;width:744.00px;height:1.00px;background:#dfdfdf;"></div>
<div class="r" style="left:24.00px;top:258.25px;width:662.00px;height:1.00px;background:#b9b9b9;"></div>
<div class="r" style="left:24.00px;top:274.60px;width:744.00px;height:1.00px;background:#dfdfdf;"></div>
<div class="r" style="left:24.00px;top:274.60px;width:662.00px;height:1.00px;background:#b9b9b9;"></div>
<div class="r" style="left:24.00px;top:290.95px;width:744.00px;height:1.00px;background:#dfdfdf;"></div>
<div class="r" style="left:24.00px;top:290.95px;width:662.00px;height:1.00px;background:#b9b9b9;"></div>
<div class="r" style="left:24.00px;top:307.30px;width:744.00px;height:1.00px;background:#dfdfdf;"></div>
<div class="r" style="left:24.00px;top:307.30px;width:662.00px;height:1.00px;background:#b9b9b9;"></div>
<div class="r" style="left:24.00px;top:323.65px;width:744.00px;height:1.00px;background:#dfdfdf;"></div>
<div class="r" style="left:24.00px;top:323.65px;width:662.00px;height:1.00px;background:#b9b9b9;"></div>
<div class="r" style="left:24.00px;top:340.00px;width:744.00px;height:1.00px;background:#dfdfdf;"></div>
<div class="r" style="left:24.00px;top:340.00px;width:662.00px;height:1.00px;background:#b9b9b9;"></div>
<div class="r" style="left:24.00px;top:356.35px;width:744.00px;height:1.00px;background:#dfdfdf;"></div>
<div class="r" style="left:24.00px;top:356.35px;width:662.00px;height:1.00px;background:#b9b9b9;"></div>
<div class="r" style="left:24.00px;top:372.70px;width:744.00px;height:1.00px;background:#dfdfdf;"></div>
<div class="r" style="left:24.00px;top:372.70px;width:662.00px;height:1.00px;background:#b9b9b9;"></div>
<div class="r" style="left:24.00px;top:389.05px;width:744.00px;height:1.00px;background:#dfdfdf;"></div>
<div class="r" style="left:24.00px;top:405.40px;width:744.00px;height:1.00px;background:#dfdfdf;"></div>
<div class="r" style="left:24.00px;top:421.75px;width:744.00px;height:1.00px;background:#dfdfdf;"></div>
<div class="r" style="left:24.00px;top:438.10px;width:744.00px;height:1.00px;background:#dfdfdf;"></div>
<div class="r" style="left:24.00px;top:454.45px;width:744.00px;height:1.00px;background:#dfdfdf;"></div>
<div class="r" style="left:24.00px;top:470.80px;width:744.00px;height:1.00px;background:#dfdfdf;"></div>
<div class="r" style="left:24.00px;top:487.15px;width:744.00px;height:1.00px;background:#dfdfdf;"></div>
<div class="r" style="left:79.50px;top:160.00px;width:1.00px;height:321.50px;background:#dfdfdf;"></div>
<div class="r" style="left:79.50px;top:160.00px;width:1.00px;height:212.55px;background:#b9b9b9;"></div>
<div class="r" style="left:150.50px;top:160.00px;width:1.00px;height:321.50px;background:#dfdfdf;"></div>
<div class="r" style="left:150.50px;top:160.00px;width:1.00px;height:212.55px;background:#b9b9b9;"></div>
<div class="r" style="left:221.50px;top:160.00px;width:1.00px;height:321.50px;background:#dfdfdf;"></div>
<div class="r" style="left:221.50px;top:160.00px;width:1.00px;height:212.55px;background:#b9b9b9;"></div>
<div class="r" style="left:292.00px;top:160.00px;width:1.00px;height:321.50px;background:#dfdfdf;"></div>
<div class="r" style="left:292.00px;top:160.00px;width:1.00px;height:212.55px;background:#b9b9b9;"></div>
<div class="r" style="left:344.50px;top:160.00px;width:1.00px;height:321.50px;background:#dfdfdf;"></div>
<div class="r" style="left:344.50px;top:160.00px;width:1.00px;height:212.55px;background:#b9b9b9;"></div>
<div class="r" style="left:396.50px;top:160.00px;width:1.00px;height:321.50px;background:#dfdfdf;"></div>
<div class="r" style="left:396.50px;top:160.00px;width:1.00px;height:212.55px;background:#b9b9b9;"></div>
<div class="r" style="left:449.50px;top:160.00px;width:1.00px;height:321.50px;background:#dfdfdf;"></div>
<div class="r" style="left:449.50px;top:160.00px;width:1.00px;height:212.55px;background:#b9b9b9;"></div>
<div class="r" style="left:503.00px;top:160.00px;width:1.00px;height:321.50px;background:#dfdfdf;"></div>
<div class="r" style="left:503.00px;top:160.00px;width:1.00px;height:212.55px;background:#b9b9b9;"></div>
<div class="r" style="left:563.50px;top:160.00px;width:1.00px;height:321.50px;background:#dfdfdf;"></div>
<div class="r" style="left:563.50px;top:160.00px;width:1.00px;height:212.55px;background:#b9b9b9;"></div>
<div class="r" style="left:633.00px;top:160.00px;width:1.00px;height:321.50px;background:#dfdfdf;"></div>
<div class="r" style="left:633.00px;top:160.00px;width:1.00px;height:212.55px;background:#b9b9b9;"></div>
<div class="r" style="left:685.50px;top:160.00px;width:1.00px;height:321.50px;background:#dfdfdf;"></div>
<div class="r" style="left:685.50px;top:160.00px;width:1.00px;height:212.55px;background:#b9b9b9;"></div>
<div class="r" style="left:738.00px;top:160.00px;width:1.00px;height:321.50px;background:#dfdfdf;"></div>
<div class="r" style="left:790.50px;top:160.00px;width:1.00px;height:321.50px;background:#dfdfdf;"></div>
<svg class="r" style="left:190px;top:285px" width="420" height="170" viewBox="190 285 420 170">
<defs><mask id="smask" maskUnits="userSpaceOnUse" x="190" y="285" width="130" height="125"><rect x="190" y="285" width="130" height="125" fill="#fff"/><text font-family="Liberation Sans, sans-serif" font-weight="bold" font-size="100" fill="#000" stroke="#000" stroke-width="5" transform="translate(253.50 396.65) scale(0.8134 1.3451)">S</text></mask></defs>
<g opacity="0.34" fill="#4660a0">
<rect x="197.3" y="296.7" width="117.3" height="106.6" mask="url(#smask)"/>
<g stroke="#4660a0" stroke-width="0.6" stroke-linejoin="miter">
<text font-family="Liberation Sans, sans-serif" font-weight="bold" font-size="100" transform="translate(316.30 399.90) scale(1.3557 1.4406)">T</text>
<text font-family="Liberation Sans, sans-serif" font-weight="bold" font-size="100" transform="translate(407.00 399.90) scale(0.9328 1.4406)">E</text>
<text font-family="Liberation Sans, sans-serif" font-weight="bold" font-size="100" transform="translate(475.50 399.90) scale(1.0843 1.4406)">M</text>
</g></g>
<text x="580" y="391" font-family="Liberation Sans, sans-serif" font-size="20" fill="rgba(70,96,160,0.2)">®</text>
<rect x="197" y="407.2" width="378" height="3.6" fill="rgba(226,60,60,0.31)"/>
<text x="200" y="435" font-family="Liberation Sans, sans-serif" font-size="24" fill="rgba(80,100,160,0.27)" letter-spacing="6.122">www.sterling-team.com</text>
</svg>
<div class="t c" style="left:26.70px;top:163.12px;font-size:11.5px;line-height:13.80px;color:#222;letter-spacing:-0.17px;">Name</div>
<div class="t c" style="left:82.70px;top:163.12px;font-size:11.5px;line-height:13.80px;color:#222;letter-spacing:-0.17px;">First No.</div>
<div class="t c" style="left:153.70px;top:163.12px;font-size:11.5px;line-height:13.80px;color:#222;letter-spacing:-0.17px;">Next No.</div>
<div class="t c" style="left:224.70px;top:163.12px;font-size:11.5px;line-height:13.80px;color:#222;letter-spacing:-0.17px;">Last No.</div>
<div class="t c" style="left:295.20px;top:163.12px;font-size:11.5px;line-height:13.80px;color:#222;letter-spacing:-0.17px;">Prefix</div>
<div class="t c" style="left:347.70px;top:163.12px;font-size:11.5px;line-height:13.80px;color:#222;letter-spacing:-0.17px;">Suffix</div>
<div class="t c" style="left:399.70px;top:163.12px;font-size:11.5px;line-height:13.80px;color:#222;letter-spacing:-0.17px;">Remarks</div>
<div class="t c" style="left:452.70px;top:163.12px;font-size:11.5px;line-height:13.80px;color:#222;letter-spacing:-0.17px;">Group</div>
<div class="t c" style="left:506.20px;top:163.12px;font-size:11.5px;line-height:13.80px;color:#222;letter-spacing:-0.17px;">Period Ind.</div>
<div class="t c" style="left:566.70px;top:163.12px;font-size:11.5px;line-height:13.80px;color:#222;letter-spacing:-0.17px;">Cancellation</div>
<div class="t c" style="left:636.20px;top:163.12px;font-size:11.5px;line-height:13.80px;color:#222;letter-spacing:-0.17px;">Lock</div>
<div class="t c" style="left:26.70px;top:179.47px;font-size:11.5px;line-height:13.80px;color:#222;letter-spacing:-0.1px;">OB</div>
<div class="t c" style="left:142.45px;top:179.47px;font-size:11.5px;line-height:13.80px;color:#222;letter-spacing:-0.05px;">1</div>
<div class="t c" style="left:200.76px;top:179.47px;font-size:11.5px;line-height:13.80px;color:#222;letter-spacing:-0.05px;">948</div>
<div class="t c" style="left:226.85px;top:179.47px;font-size:11.5px;line-height:13.80px;color:#222;letter-spacing:-0.05px;">1000000000</div>
<div class="t c" style="left:494.95px;top:179.47px;font-size:11.5px;line-height:13.80px;color:#222;letter-spacing:-0.05px;">1</div>
<div class="t c" style="left:549.11px;top:179.47px;font-size:11.5px;line-height:13.80px;color:#222;letter-spacing:-0.05px;">15</div>
<div class="t c" style="left:566.70px;top:179.47px;font-size:11.5px;line-height:13.80px;color:#222;letter-spacing:-0.1px;">N</div>
<div class="t c" style="left:636.20px;top:179.47px;font-size:11.5px;line-height:13.80px;color:#222;letter-spacing:-0.1px;">Y</div>
<div class="t c" style="left:26.70px;top:195.83px;font-size:11.5px;line-height:13.80px;color:#222;letter-spacing:-0.1px;">15-AP</div>
<div class="t c" style="left:85.35px;top:195.83px;font-size:11.5px;line-height:13.80px;color:#222;letter-spacing:-0.05px;">1510000001</div>
<div class="t c" style="left:156.35px;top:195.83px;font-size:11.5px;line-height:13.80px;color:#222;letter-spacing:-0.05px;">1510005659</div>
<div class="t c" style="left:226.85px;top:195.83px;font-size:11.5px;line-height:13.80px;color:#222;letter-spacing:-0.05px;">1519999999</div>
<div class="t c" style="left:494.95px;top:195.83px;font-size:11.5px;line-height:13.80px;color:#222;letter-spacing:-0.05px;">1</div>
<div class="t c" style="left:549.11px;top:195.83px;font-size:11.5px;line-height:13.80px;color:#222;letter-spacing:-0.05px;">15</div>
<div class="t c" style="left:566.70px;top:195.83px;font-size:11.5px;line-height:13.80px;color:#222;letter-spacing:-0.1px;">N</div>
<div class="t c" style="left:636.20px;top:195.83px;font-size:11.5px;line-height:13.80px;color:#222;letter-spacing:-0.1px;">N</div>
<div class="t c" style="left:26.70px;top:212.18px;font-size:11.5px;line-height:13.80px;color:#222;letter-spacing:-0.1px;">16-AP</div>
<div class="t c" style="left:85.35px;top:212.18px;font-size:11.5px;line-height:13.80px;color:#222;letter-spacing:-0.05px;">1610000001</div>
<div class="t c" style="left:156.35px;top:212.18px;font-size:11.5px;line-height:13.80px;color:#222;letter-spacing:-0.05px;">1610008672</div>
<div class="t c" style="left:226.85px;top:212.18px;font-size:11.5px;line-height:13.80px;color:#222;letter-spacing:-0.05px;">1619999999</div>
<div class="t c" style="left:494.95px;top:212.18px;font-size:11.5px;line-height:13.80px;color:#222;letter-spacing:-0.05px;">1</div>
<div class="t c" style="left:549.11px;top:212.18px;font-size:11.5px;line-height:13.80px;color:#222;letter-spacing:-0.05px;">16</div>
<div class="t c" style="left:566.70px;top:212.18px;font-size:11.5px;line-height:13.80px;color:#222;letter-spacing:-0.1px;">N</div>
<div class="t c" style="left:636.20px;top:212.18px;font-size:11.5px;line-height:13.80px;color:#222;letter-spacing:-0.1px;">N</div>
<div class="t c" style="left:26.70px;top:228.53px;font-size:11.5px;line-height:13.80px;color:#222;letter-spacing:-0.1px;">17-AP</div>
<div class="t c" style="left:85.35px;top:228.53px;font-size:11.5px;line-height:13.80px;color:#222;letter-spacing:-0.05px;">1710000001</div>
<div class="t c" style="left:156.35px;top:228.53px;font-size:11.5px;line-height:13.80px;color:#222;letter-spacing:-0.05px;">1710007531</div>
<div class="t c" style="left:226.85px;top:228.53px;font-size:11.5px;line-height:13.80px;color:#222;letter-spacing:-0.05px;">1719999999</div>
<div class="t c" style="left:494.95px;top:228.53px;font-size:11.5px;line-height:13.80px;color:#222;letter-spacing:-0.05px;">1</div>
<div class="t c" style="left:549.11px;top:228.53px;font-size:11.5px;line-height:13.80px;color:#222;letter-spacing:-0.05px;">17</div>
<div class="t c" style="left:566.70px;top:228.53px;font-size:11.5px;line-height:13.80px;color:#222;letter-spacing:-0.1px;">N</div>
<div class="t c" style="left:636.20px;top:228.53px;font-size:11.5px;line-height:13.80px;color:#222;letter-spacing:-0.1px;">N</div>
<div class="t c" style="left:26.70px;top:244.88px;font-size:11.5px;line-height:13.80px;color:#222;letter-spacing:-0.1px;">18-AP</div>
<div class="t c" style="left:85.35px;top:244.88px;font-size:11.5px;line-height:13.80px;color:#222;letter-spacing:-0.05px;">1810000001</div>
<div class="t c" style="left:157.20px;top:244.88px;font-size:11.5px;line-height:13.80px;color:#222;letter-spacing:-0.05px;">1810001123</div>
<div class="t c" style="left:226.85px;top:244.88px;font-size:11.5px;line-height:13.80px;color:#222;letter-spacing:-0.05px;">1819999999</div>
<div class="t c" style="left:494.95px;top:244.88px;font-size:11.5px;line-height:13.80px;color:#222;letter-spacing:-0.05px;">1</div>
<div class="t c" style="left:549.11px;top:244.88px;font-size:11.5px;line-height:13.80px;color:#222;letter-spacing:-0.05px;">18</div>
<div class="t c" style="left:566.70px;top:244.88px;font-size:11.5px;line-height:13.80px;color:#222;letter-spacing:-0.1px;">N</div>
<div class="t c" style="left:636.20px;top:244.88px;font-size:11.5px;line-height:13.80px;color:#222;letter-spacing:-0.1px;">N</div>
<div class="t c" style="left:26.70px;top:261.23px;font-size:11.5px;line-height:13.80px;color:#222;letter-spacing:-0.1px;">19-AP</div>
<div class="t c" style="left:85.35px;top:261.23px;font-size:11.5px;line-height:13.80px;color:#222;letter-spacing:-0.05px;">1910000001</div>
<div class="t c" style="left:156.35px;top:261.23px;font-size:11.5px;line-height:13.80px;color:#222;letter-spacing:-0.05px;">1910000002</div>
<div class="t c" style="left:226.85px;top:261.23px;font-size:11.5px;line-height:13.80px;color:#222;letter-spacing:-0.05px;">1919999999</div>
<div class="t c" style="left:494.95px;top:261.23px;font-size:11.5px;line-height:13.80px;color:#222;letter-spacing:-0.05px;">1</div>
<div class="t c" style="left:549.11px;top:261.23px;font-size:11.5px;line-height:13.80px;color:#222;letter-spacing:-0.05px;">19</div>
<div class="t c" style="left:566.70px;top:261.23px;font-size:11.5px;line-height:13.80px;color:#222;letter-spacing:-0.1px;">N</div>
<div class="t c" style="left:636.20px;top:261.23px;font-size:11.5px;line-height:13.80px;color:#222;letter-spacing:-0.1px;">N</div>
<div class="t c" style="left:26.70px;top:277.58px;font-size:11.5px;line-height:13.80px;color:#222;letter-spacing:-0.1px;">20-AP</div>
<div class="t c" style="left:85.35px;top:277.58px;font-size:11.5px;line-height:13.80px;color:#222;letter-spacing:-0.05px;">2010000001</div>
<div class="t c" style="left:156.35px;top:277.58px;font-size:11.5px;line-height:13.80px;color:#222;letter-spacing:-0.05px;">2010000001</div>
<div class="t c" style="left:226.85px;top:277.58px;font-size:11.5px;line-height:13.80px;color:#222;letter-spacing:-0.05px;">2019999999</div>
<div class="t c" style="left:494.95px;top:277.58px;font-size:11.5px;line-height:13.80px;color:#222;letter-spacing:-0.05px;">1</div>
<div class="t c" style="left:549.11px;top:277.58px;font-size:11.5px;line-height:13.80px;color:#222;letter-spacing:-0.05px;">20</div>
<div class="t c" style="left:566.70px;top:277.58px;font-size:11.5px;line-height:13.80px;color:#222;letter-spacing:-0.1px;">N</div>
<div class="t c" style="left:636.20px;top:277.58px;font-size:11.5px;line-height:13.80px;color:#222;letter-spacing:-0.1px;">N</div>
<div class="t c" style="left:26.70px;top:293.93px;font-size:11.5px;line-height:13.80px;color:#222;letter-spacing:-0.1px;">21-AP</div>
<div class="t c" style="left:92.55px;top:293.93px;font-size:11.5px;line-height:13.80px;color:#222;letter-spacing:-0.05px;">211000001</div>
<div class="t c" style="left:163.55px;top:293.93px;font-size:11.5px;line-height:13.80px;color:#222;letter-spacing:-0.05px;">211000001</div>
<div class="t c" style="left:233.19px;top:293.93px;font-size:11.5px;line-height:13.80px;color:#222;letter-spacing:-0.05px;">219999999</div>
<div class="t c" style="left:494.95px;top:293.93px;font-size:11.5px;line-height:13.80px;color:#222;letter-spacing:-0.05px;">1</div>
<div class="t c" style="left:549.11px;top:293.93px;font-size:11.5px;line-height:13.80px;color:#222;letter-spacing:-0.05px;">21</div>
<div class="t c" style="left:566.70px;top:293.93px;font-size:11.5px;line-height:13.80px;color:#222;letter-spacing:-0.1px;">N</div>
<div class="t c" style="left:636.20px;top:293.93px;font-size:11.5px;line-height:13.80px;color:#222;letter-spacing:-0.1px;">N</div>
<div class="t c" style="left:26.70px;top:310.28px;font-size:11.5px;line-height:13.80px;color:#222;letter-spacing:-0.1px;">22-AP</div>
<div class="t c" style="left:91.69px;top:310.28px;font-size:11.5px;line-height:13.80px;color:#222;letter-spacing:-0.05px;">221000001</div>
<div class="t c" style="left:162.69px;top:310.28px;font-size:11.5px;line-height:13.80px;color:#222;letter-spacing:-0.05px;">221000001</div>
<div class="t c" style="left:233.19px;top:310.28px;font-size:11.5px;line-height:13.80px;color:#222;letter-spacing:-0.05px;">229999999</div>
<div class="t c" style="left:494.95px;top:310.28px;font-size:11.5px;line-height:13.80px;color:#222;letter-spacing:-0.05px;">1</div>
<div class="t c" style="left:549.11px;top:310.28px;font-size:11.5px;line-height:13.80px;color:#222;letter-spacing:-0.05px;">22</div>
<div class="t c" style="left:566.70px;top:310.28px;font-size:11.5px;line-height:13.80px;color:#222;letter-spacing:-0.1px;">N</div>
<div class="t c" style="left:636.20px;top:310.28px;font-size:11.5px;line-height:13.80px;color:#222;letter-spacing:-0.1px;">N</div>
<div class="t c" style="left:26.70px;top:326.62px;font-size:11.5px;line-height:13.80px;color:#222;letter-spacing:-0.1px;">23-AP</div>
<div class="t c" style="left:91.69px;top:326.62px;font-size:11.5px;line-height:13.80px;color:#222;letter-spacing:-0.05px;">231000001</div>
<div class="t c" style="left:162.69px;top:326.62px;font-size:11.5px;line-height:13.80px;color:#222;letter-spacing:-0.05px;">231000001</div>
<div class="t c" style="left:233.19px;top:326.62px;font-size:11.5px;line-height:13.80px;color:#222;letter-spacing:-0.05px;">239999999</div>
<div class="t c" style="left:494.95px;top:326.62px;font-size:11.5px;line-height:13.80px;color:#222;letter-spacing:-0.05px;">1</div>
<div class="t c" style="left:549.11px;top:326.62px;font-size:11.5px;line-height:13.80px;color:#222;letter-spacing:-0.05px;">23</div>
<div class="t c" style="left:566.70px;top:326.62px;font-size:11.5px;line-height:13.80px;color:#222;letter-spacing:-0.1px;">N</div>
<div class="t c" style="left:636.20px;top:326.62px;font-size:11.5px;line-height:13.80px;color:#222;letter-spacing:-0.1px;">N</div>
<div class="t c" style="left:26.70px;top:342.98px;font-size:11.5px;line-height:13.80px;color:#222;letter-spacing:-0.1px;">24-AP</div>
<div class="t c" style="left:91.69px;top:342.98px;font-size:11.5px;line-height:13.80px;color:#222;letter-spacing:-0.05px;">241000001</div>
<div class="t c" style="left:162.69px;top:342.98px;font-size:11.5px;line-height:13.80px;color:#222;letter-spacing:-0.05px;">241000001</div>
<div class="t c" style="left:233.19px;top:342.98px;font-size:11.5px;line-height:13.80px;color:#222;letter-spacing:-0.05px;">249999999</div>
<div class="t c" style="left:494.95px;top:342.98px;font-size:11.5px;line-height:13.80px;color:#222;letter-spacing:-0.05px;">1</div>
<div class="t c" style="left:549.11px;top:342.98px;font-size:11.5px;line-height:13.80px;color:#222;letter-spacing:-0.05px;">24</div>
<div class="t c" style="left:566.70px;top:342.98px;font-size:11.5px;line-height:13.80px;color:#222;letter-spacing:-0.1px;">N</div>
<div class="t c" style="left:636.20px;top:342.98px;font-size:11.5px;line-height:13.80px;color:#222;letter-spacing:-0.1px;">N</div>
<div class="t c" style="left:26.70px;top:359.33px;font-size:11.5px;line-height:13.80px;color:#222;letter-spacing:-0.1px;">25-AP</div>
<div class="t c" style="left:91.69px;top:359.33px;font-size:11.5px;line-height:13.80px;color:#222;letter-spacing:-0.05px;">251000001</div>
<div class="t c" style="left:162.69px;top:359.33px;font-size:11.5px;line-height:13.80px;color:#222;letter-spacing:-0.05px;">251000001</div>
<div class="t c" style="left:233.19px;top:359.33px;font-size:11.5px;line-height:13.80px;color:#222;letter-spacing:-0.05px;">259999999</div>
<div class="t c" style="left:494.95px;top:359.33px;font-size:11.5px;line-height:13.80px;color:#222;letter-spacing:-0.05px;">1</div>
<div class="t c" style="left:549.11px;top:359.33px;font-size:11.5px;line-height:13.80px;color:#222;letter-spacing:-0.05px;">25</div>
<div class="t c" style="left:566.70px;top:359.33px;font-size:11.5px;line-height:13.80px;color:#222;letter-spacing:-0.1px;">N</div>
<div class="t c" style="left:636.20px;top:359.33px;font-size:11.5px;line-height:13.80px;color:#222;letter-spacing:-0.1px;">N</div>
<svg class="r" style="left:0;top:140px" width="768" height="250" viewBox="0 140 768 250"><path d="M24.3 373.20V160.1H686.2V373.20" fill="none" stroke="#3f8563" stroke-width="1.6"/></svg>
<svg class="r" style="left:0;top:280px" width="768" height="100" viewBox="0 280 768 100"><rect x="24.5" y="291.35" width="660.6" height="81.85" fill="none" stroke="#e0262e" stroke-width="2"/></svg>
<svg class="r" style="left:688.00px;top:375.00px" width="12" height="12" viewBox="0 0 12 12"><rect x="0.5" y="0.5" width="9.5" height="9.5" fill="#fff" stroke="#9a9a9a" stroke-width="0.8"/><rect x="1.8" y="2" width="3.6" height="2" fill="#3b78c4"/><path d="M2 6H8.4M2 7.8H8.4" stroke="#aaa" stroke-width="0.7"/><rect x="7.4" y="7.4" width="4.2" height="4.2" fill="#f4f4f4" stroke="#9a9a9a" stroke-width="0.6"/></svg>
<svg class="r" style="left:540.00px;top:370.00px" width="30" height="34" viewBox="0 0 30 34"><path d="M4 3.4L23 30.4" stroke="#b8383c" stroke-width="0.9"/></svg>
<div class="r" style="left:562.50px;top:388.50px;width:71.50px;height:18.00px;background:#fff;border:1.2px solid #d8323a;box-sizing:border-box;"></div>
<div class="t " style="left:567.30px;top:388.44px;font-size:15.6px;line-height:18.72px;color:#d8141e;font-weight:bold;letter-spacing:0.22px;">Ctrl + C</div>
<div class="r" style="left:0.00px;top:481.50px;width:768.00px;height:21.00px;background:#e6e6e6;"></div>
<div class="r" style="left:0.00px;top:481.50px;width:768.00px;height:1.00px;background:#c9c9c9;"></div>
<svg class="r" style="left:19.00px;top:489.00px" width="5" height="6" viewBox="0 0 5 6"><path d="M4 0.5L1 3L4 5.5Z" fill="#bdbdbd"/></svg>
<svg class="r" style="left:40.00px;top:489.00px" width="5" height="6" viewBox="0 0 5 6"><path d="M1 0.5L4 3L1 5.5Z" fill="#bdbdbd"/></svg>
<div class="r" style="left:72.00px;top:481.50px;width:45.50px;height:18.50px;background:#fff;border-bottom:1.6px solid #217346;box-sizing:border-box;"></div>
<div class="t " style="left:80.50px;top:485.30px;font-size:10px;line-height:12.00px;color:#217346;letter-spacing:-0.632px;font-weight:bold;">Sheet1</div>
<svg class="r" style="left:141.50px;top:486.50px" width="11" height="11" viewBox="0 0 11 11"><circle cx="5.5" cy="5.5" r="4.8" fill="none" stroke="#777" stroke-width="0.9"/><path d="M5.5 2.8V8.2M2.8 5.5H8.2" stroke="#777" stroke-width="1"/></svg>
<div class="r" style="left:583.00px;top:489.00px;width:1.20px;height:1.20px;background:#999;"></div>
<div class="r" style="left:583.00px;top:492.00px;width:1.20px;height:1.20px;background:#999;"></div>
<div class="r" style="left:583.00px;top:495.00px;width:1.20px;height:1.20px;background:#999;"></div>
<div class="r" style="left:595.00px;top:487.00px;width:10.50px;height:11.00px;background:#fff;border:1px solid #b4b4b4;box-sizing:border-box;"></div>
<svg class="r" style="left:598.00px;top:489.50px" width="5" height="6" viewBox="0 0 5 6"><path d="M4 0.5L1 3L4 5.5Z" fill="#555"/></svg>
<div class="r" style="left:605.00px;top:487.00px;width:164.00px;height:11.00px;background:#fff;border:1px solid #cfcfcf;box-sizing:border-box;border-left:none;"></div>
<div class="r" style="left:0.00px;top:501.80px;width:768.00px;height:16.20px;background:#f1f1f1;"></div>
<div class="t " style="left:6.00px;top:504.84px;font-size:8.6px;line-height:10.32px;color:#444;letter-spacing:-0.572px;">Ready</div>
<div class="t " style="left:549.00px;top:504.84px;font-size:8.6px;line-height:10.32px;color:#444;letter-spacing:-0.493px;">Average: 604167069.8</div>
<div class="t " style="left:638.00px;top:504.84px;font-size:8.6px;line-height:10.32px;color:#444;letter-spacing:-0.307px;">Count: 107</div>
<div class="t " style="left:689.00px;top:504.84px;font-size:8.6px;line-height:10.32px;color:#444;letter-spacing:-0.504px;">Sum: 36250024189</div>
</div></body></html>
